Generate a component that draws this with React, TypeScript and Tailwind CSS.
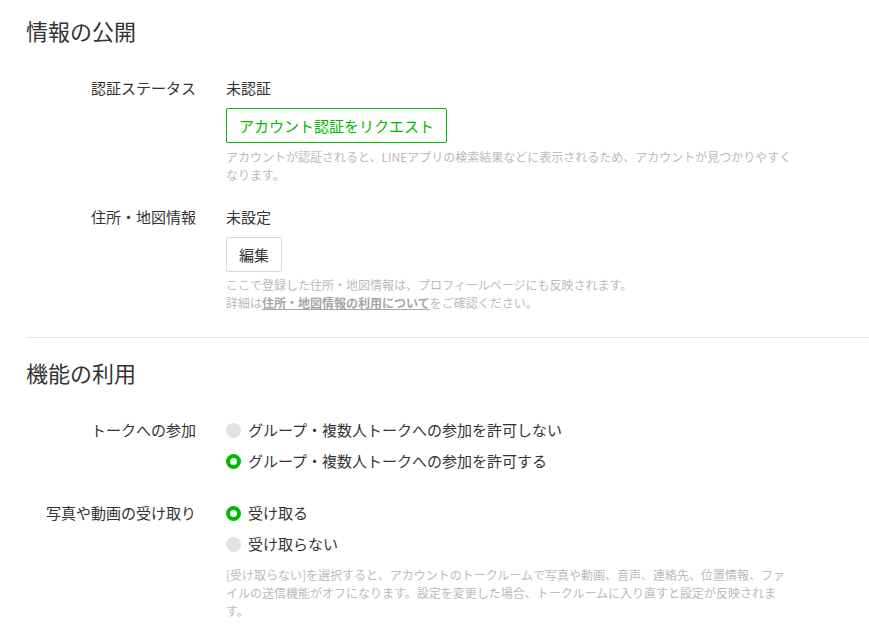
import type { ReactNode } from 'react';

const font = { fontFamily: '"Noto Sans CJK JP", "Noto Sans", sans-serif' };

function Row({ label, children }: { label: string; children: ReactNode }) {
  return (
    <div className="flex gap-[30px]">
      <div className="w-[170px] shrink-0 text-right text-[15px] leading-[20px] text-[#333]">{label}</div>
      <div className="flex-1 text-[15px] leading-[20px] text-[#333]">{children}</div>
    </div>
  );
}

function Help({ children, className = '' }: { children: ReactNode; className?: string }) {
  return <p className={`max-w-[568px] text-[12px] leading-[18px] text-[#b7bbc2] ${className}`}>{children}</p>;
}

function Radio({ checked, label }: { checked?: boolean; label: string }) {
  return (
    <label className="flex items-center gap-[7px] text-[15px] leading-[20px] text-[#333]">
      <span
        className={`block h-[15px] w-[15px] rounded-full ${
          checked ? 'border-[4px] border-[#00b900] bg-white' : 'bg-[#dfe2e6]'
        }`}
      />
      {label}
    </label>
  );
}

export default function App() {
  return (
    <div className="min-h-[635px] bg-white pt-[16px]" style={font}>
      <section className="px-[26px]">
        <h2 className="text-[22px] leading-[28px] font-normal text-[#333]">情報の公開</h2>
        <div className="mt-[34px] flex flex-col gap-[23px]">
          <Row label="認証ステータス">
            <div>未認証</div>
            <button
              type="button"
              className="mt-[10px] h-[35px] rounded-[2px] border border-[#00b900] px-[12px] text-[15px] text-[#00b900]"
            >
              アカウント認証をリクエスト
            </button>
            <Help className="mt-[5px]">
              アカウントが認証されると、LINEアプリの検索結果などに表示されるため、アカウントが見つかりやすくなります。
            </Help>
          </Row>
          <Row label="住所・地図情報">
            <div>未設定</div>
            <button
              type="button"
              className="mt-[10px] h-[35px] rounded-[2px] border border-[#d5d8dd] px-[12px] text-[15px] text-[#333]"
            >
              編集
            </button>
            <Help className="mt-[4px]">
              ここで登録した住所・地図情報は、プロフィールページにも反映されます。
              <br />
              詳細は
              <a className="font-bold text-[#a3a7ad] underline">住所・地図情報の利用について</a>
              をご確認ください。
            </Help>
          </Row>
        </div>
      </section>

      <div className="ml-[26px] mt-[25px] border-t border-[#e6e6e6]" />

      <section className="px-[26px] pt-[20px]">
        <h2 className="text-[22px] leading-[28px] font-normal text-[#333]">機能の利用</h2>
        <div className="mt-[34px] flex flex-col gap-[32px]">
          <Row label="トークへの参加">
            <div className="flex flex-col gap-[11px]">
              <Radio label="グループ・複数人トークへの参加を許可しない" />
              <Radio checked label="グループ・複数人トークへの参加を許可する" />
            </div>
          </Row>
          <Row label="写真や動画の受け取り">
            <div className="flex flex-col gap-[11px]">
              <Radio checked label="受け取る" />
              <Radio label="受け取らない" />
            </div>
            <Help className="mt-[12px]">
              [受け取らない]を選択すると、アカウントのトークルームで写真や動画、音声、連絡先、位置情報、ファイルの送信機能がオフになります。設定を変更した場合、トークルームに入り直すと設定が反映されます。
            </Help>
          </Row>
        </div>
      </section>
    </div>
  );
}
